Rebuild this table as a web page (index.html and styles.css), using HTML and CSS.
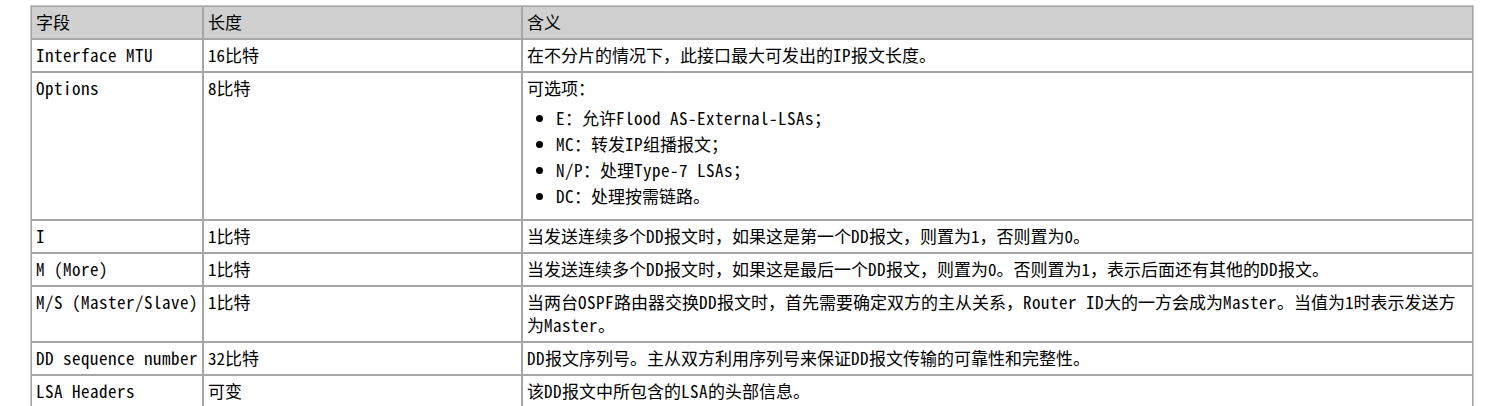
FILE: index.html
```html
<!DOCTYPE html>
<html lang="zh-CN">
<head>
<meta charset="utf-8">
<title>DD报文字段</title>
<link rel="stylesheet" href="styles.css">
</head>
<body>
<table class="fields">
  <colgroup>
    <col class="c-field">
    <col class="c-len">
    <col class="c-desc">
  </colgroup>
  <thead>
    <tr><th>字段</th><th>长度</th><th>含义</th></tr>
  </thead>
  <tbody>
    <tr><td class="en">Interface MTU</td><td>16比特</td><td>在不分片的情况下，此接口最大可发出的<span class="en">IP</span>报文长度。</td></tr>
    <tr>
      <td class="en">Options</td><td>8比特</td>
      <td>
        <p class="lead">可选项：</p>
        <ul class="opts">
          <li><span class="en">E</span>：允许<span class="en">Flood AS-External-LSAs</span>；</li>
          <li><span class="en">MC</span>：转发<span class="en">IP</span>组播报文；</li>
          <li><span class="en">N/P</span>：处理<span class="en">Type-7 LSAs</span>；</li>
          <li><span class="en">DC</span>：处理按需链路。</li>
        </ul>
      </td>
    </tr>
    <tr><td class="en">I</td><td>1比特</td><td>当发送连续多个<span class="en">DD</span>报文时，如果这是第一个<span class="en">DD</span>报文，则置为1，否则置为0。</td></tr>
    <tr><td class="en">M (More)</td><td>1比特</td><td>当发送连续多个<span class="en">DD</span>报文时，如果这是最后一个<span class="en">DD</span>报文，则置为0。否则置为1，表示后面还有其他的<span class="en">DD</span>报文。</td></tr>
    <tr><td class="en">M/S (Master/Slave)</td><td>1比特</td><td>当两台<span class="en">OSPF</span>路由器交换<span class="en">DD</span>报文时，首先需要确定双方的主从关系，<span class="en">Router ID</span>大的一方会成为<span class="en">Master</span>。当值为1时表示发送方为<span class="en">Master</span>。</td></tr>
    <tr><td class="en">DD sequence number</td><td>32比特</td><td><span class="en">DD</span>报文序列号。主从双方利用序列号来保证<span class="en">DD</span>报文传输的可靠性和完整性。</td></tr>
    <tr><td class="en">LSA Headers</td><td>可变</td><td>该<span class="en">DD</span>报文中所包含的<span class="en">LSA</span>的头部信息。</td></tr>
  </tbody>
</table>
</body>
</html>
```
FILE: styles.css
```css
html, body {
  margin: 0;
  padding: 0;
  background: #ffffff;
}

body {
  font-family: "Noto Sans Mono CJK SC", "Noto Sans CJK SC", "Liberation Mono", monospace;
  font-size: 17px;
  line-height: 23px;
  color: #000000;
}

.fields {
  margin: 5px 0 0 30px;
  width: 1444px;
  table-layout: fixed;
  border-collapse: separate;
  border-spacing: 0;
  border: 1px solid #c4c4c4;
}

.c-field { width: 172px; }
.c-len { width: 319px; }

.fields th,
.fields td {
  border: 1px solid #a6a6a6;
  padding: 3px 4px 5px;
  text-align: left;
  vertical-align: top;
  font-weight: normal;
}

.fields th {
  background: #d0d0d0;
}

.en {
  letter-spacing: 0.5px;
}

.lead {
  margin: 0;
}

.opts {
  margin: 7px 0 7px 0;
  padding: 0 0 0 29px;
  list-style: disc;
}

.opts li {
  margin-bottom: 3px;
}

.opts li:last-child {
  margin-bottom: 0;
}
```
